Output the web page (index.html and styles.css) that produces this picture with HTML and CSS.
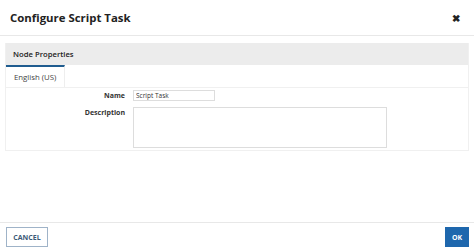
FILE: index.html
```html
<!DOCTYPE html>
<html lang="en">
<head>
<meta charset="UTF-8">
<meta name="viewport" content="width=device-width, initial-scale=1.0">
<title>Configure Script Task</title>
<link rel="stylesheet" href="styles.css">
</head>
<body>
<div class="modal">
    <div class="modal-header">
        <h1>Configure Script Task</h1>
        <span class="close">&#10006;</span>
    </div>
    <div class="modal-body">
        <div class="panel">
            <div class="panel-heading">Node Properties</div>
            <div class="tabs">
                <div class="tab active">English (US)</div>
            </div>
            <div class="tab-content">
                <div class="form-row">
                    <label>Name</label>
                    <input type="text" value="Script Task">
                </div>
                <div class="form-row">
                    <label>Description</label>
                    <textarea></textarea>
                </div>
            </div>
        </div>
    </div>
    <div class="modal-footer">
        <button class="btn-cancel">CANCEL</button>
        <button class="btn-ok">OK</button>
    </div>
</div>
</body>
</html>
```

FILE: styles.css
```css
body {
    margin: 0;
    padding: 0;
    font-family: "Open Sans", sans-serif;
    background: #fff;
    color: #333;
}
.modal {
    display: flex;
    flex-direction: column;
    height: 251px;
}
.modal-header {
    display: flex;
    justify-content: space-between;
    align-items: center;
    height: 36px;
    padding: 0 14px 0 10px;
    border-bottom: 1px solid #e8e8e8;
    box-sizing: border-box;
}
.modal-header h1 {
    margin: 0;
    font-size: 11.4px;
    font-weight: 700;
    color: #222;
}
.close {
    font-size: 10px;
    color: #222;
    font-weight: bold;
}
.modal-body {
    flex: 1;
    padding: 7px 5px 0 5px;
}
.panel {
    border: 1px solid #f0f0f0;
    border-top: none;
}
.panel-heading {
    background: #ececec;
    height: 22px;
    line-height: 22px;
    padding-left: 7px;
    font-size: 7.7px;
    font-weight: 600;
    color: #222;
}
.tabs {
    display: flex;
}
.tab {
    height: 20px;
    line-height: 20px;
    padding: 0 8px;
    font-size: 7.8px;
    color: #444;
    white-space: nowrap;
}
.tab.active {
    border-top: 2px solid #1f5c8f;
    border-right: 1px solid #eee;
}
.tab-content {
    border-top: 1px solid #f0f0f0;
    padding: 2px 0 2px 0;
}
.form-row {
    display: flex;
    align-items: flex-start;
}
.form-row + .form-row {
    margin-top: 6px;
}
.form-row label {
    width: 119px;
    text-align: right;
    padding-right: 8px;
    font-size: 7px;
    line-height: 11px;
    font-weight: 700;
    color: #333;
}
.form-row input {
    width: 82px;
    height: 11px;
    box-sizing: border-box;
    border: 1px solid #ddd;
    font-family: "Open Sans", sans-serif;
    font-size: 6.5px;
    padding: 0 2px;
    margin: 0;
    color: #333;
}
.form-row textarea {
    display: block;
    width: 254px;
    height: 41px;
    box-sizing: border-box;
    border: 1px solid #ddd;
    margin: 0;
    resize: none;
}
.modal-footer {
    display: flex;
    justify-content: space-between;
    align-items: center;
    height: 28px;
    padding: 0 5px 0 6px;
    border-top: 1px solid #e8e8e8;
}
.btn-cancel {
    height: 20px;
    width: 42px;
    background: #fff;
    border: 1px solid #9fb3c8;
    color: #3c5a78;
    font-family: "Open Sans", sans-serif;
    font-size: 7px;
    font-weight: 700;
    padding: 0;
}
.btn-ok {
    height: 20px;
    width: 24px;
    background: #1e67ad;
    border: none;
    color: #fff;
    font-family: "Open Sans", sans-serif;
    font-size: 7px;
    font-weight: 700;
    padding: 0;
}
```
